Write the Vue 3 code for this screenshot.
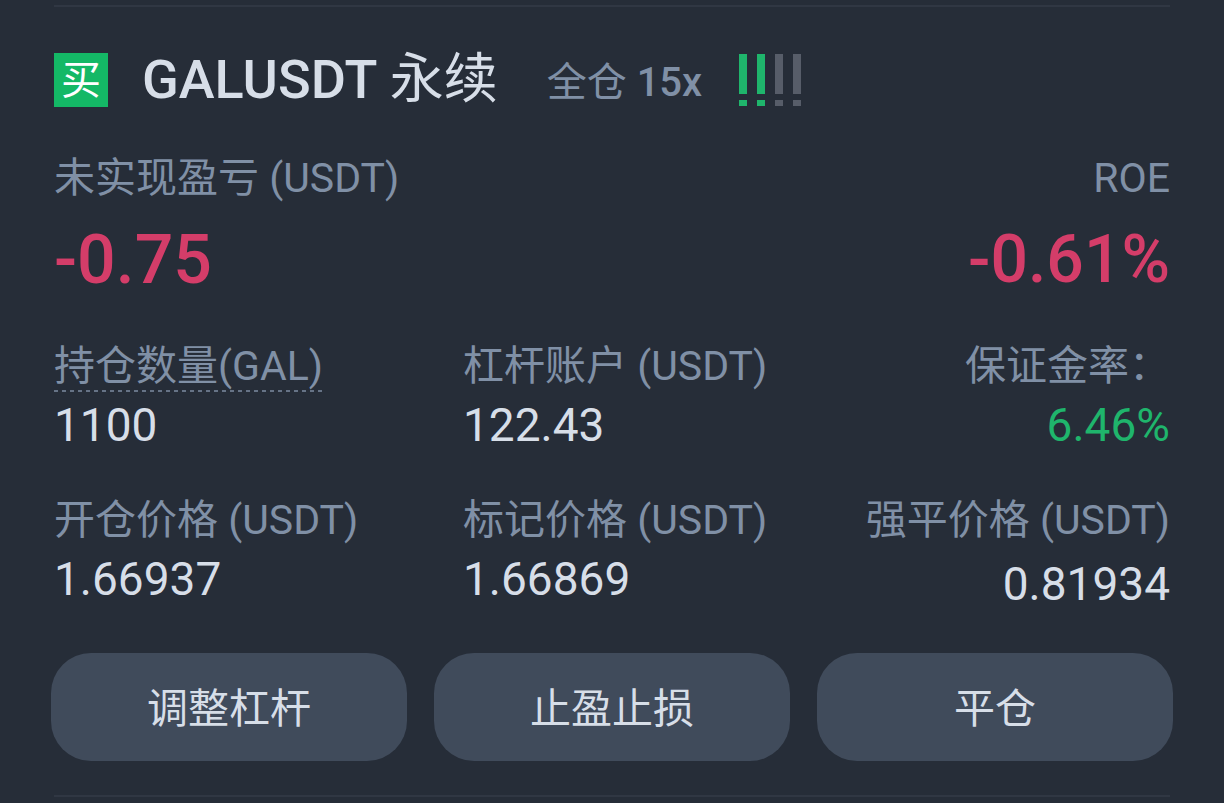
<script setup>
const signals = [true, true, false, false]
const details = [
  [
    { label: '持仓数量(GAL)', value: '1100', hint: true },
    { label: '杠杆账户 (USDT)', value: '122.43' },
    { label: '保证金率：', value: '6.46%', up: true },
  ],
  [
    { label: '开仓价格 (USDT)', value: '1.66937' },
    { label: '标记价格 (USDT)', value: '1.66869' },
    { label: '强平价格 (USDT)', value: '0.81934', low: true },
  ],
]
const actions = ['调整杠杆', '止盈止损', '平仓']
</script>

<template>
  <main class="position">
    <header class="head">
      <span class="side">买</span>
      <h1 class="symbol">GALUSDT <span>永续</span></h1>
      <span class="mode">全仓 <b>15x</b></span>
      <span class="signals" aria-hidden="true">
        <i v-for="(on, i) in signals" :key="i" class="signal" :class="{ on }"></i>
      </span>
    </header>

    <section class="pnl">
      <div>
        <div class="label">未实现盈亏 (USDT)</div>
        <div class="big">-0.75</div>
      </div>
      <div class="right">
        <div class="label">ROE</div>
        <div class="big roe">-0.61%</div>
      </div>
    </section>

    <section v-for="(row, r) in details" :key="r" class="row">
      <div v-for="cell in row" :key="cell.label" class="cell">
        <div class="label"><span :class="{ hint: cell.hint }">{{ cell.label }}</span></div>
        <div class="value" :class="{ up: cell.up, low: cell.low }">{{ cell.value }}</div>
      </div>
    </section>

    <footer class="actions">
      <button v-for="a in actions" :key="a" type="button">{{ a }}</button>
    </footer>
  </main>
</template>

<style>
body {
  background: #262d38;
}
</style>

<style scoped>
.position {
  box-sizing: border-box;
  margin: 5px 54px 0;
  padding-top: 46px;
  border-top: 2px solid #303743;
  border-bottom: 2px solid #303743;
  background: #262d38;
  color: #d7dee8;
  font-family: Roboto, "Noto Sans CJK SC", sans-serif;
}
.head {
  display: flex;
  align-items: center;
  height: 54px;
}
.side {
  box-sizing: border-box;
  width: 54px;
  height: 54px;
  margin-right: 34px;
  padding-top: 2px;
  background: #14b866;
  color: #fff;
  font-size: 40px;
  line-height: 52px;
  text-align: center;
}
.symbol {
  margin: 0 49px 0 0;
  font-size: 54px;
  font-weight: 500;
  line-height: 54px;
  white-space: nowrap;
}
.symbol span {
  font-weight: 400;
}
.mode {
  margin-right: 37px;
  padding-top: 6px;
  color: #8090a6;
  font-size: 40px;
  line-height: 54px;
  white-space: nowrap;
}
.mode b {
  font-weight: 500;
}
.signals {
  display: flex;
  gap: 10px;
}
.signal {
  width: 8px;
  height: 52px;
  background: linear-gradient(#575d69 0 40px, transparent 40px 46px, #575d69 46px);
}
.signal.on {
  background: linear-gradient(#1fb56c 0 40px, transparent 40px 46px, #1fb56c 46px);
}
.pnl {
  display: flex;
  justify-content: space-between;
  margin-top: 46px;
}
.right {
  text-align: right;
}
.label {
  color: #8090a6;
  font-size: 41px;
  line-height: 50px;
  white-space: nowrap;
}
.big {
  margin-top: 16px;
  color: #d43d69;
  font-size: 68px;
  font-weight: 500;
  line-height: 82px;
}
.roe {
  font-size: 66px;
}
.row {
  display: grid;
  grid-template-columns: 409px 1fr auto;
  height: 112px;
  margin-top: 42px;
}
.pnl + .row {
  margin-top: 40px;
}
.cell:last-child {
  text-align: right;
}
.hint {
  display: inline-block;
  height: 51px;
  margin-bottom: -1px;
  background: repeating-linear-gradient(90deg, #667386 0 4px, transparent 4px 8px) bottom / 100% 2px no-repeat;
  vertical-align: top;
}
.value {
  margin-top: 6px;
  font-size: 46px;
  line-height: 56px;
}
.up {
  color: #1fb56c;
}
.low {
  margin-top: 11px;
}
.actions {
  display: grid;
  grid-template-columns: repeat(3, 1fr);
  gap: 27px;
  margin: 46px -3px 34px;
}
.actions button {
  height: 108px;
  padding: 4px 0 0;
  border: 0;
  border-radius: 40px;
  background: #404b5b;
  color: #d7dee8;
  font: 400 41px/50px Roboto, "Noto Sans CJK SC", sans-serif;
}
</style>
